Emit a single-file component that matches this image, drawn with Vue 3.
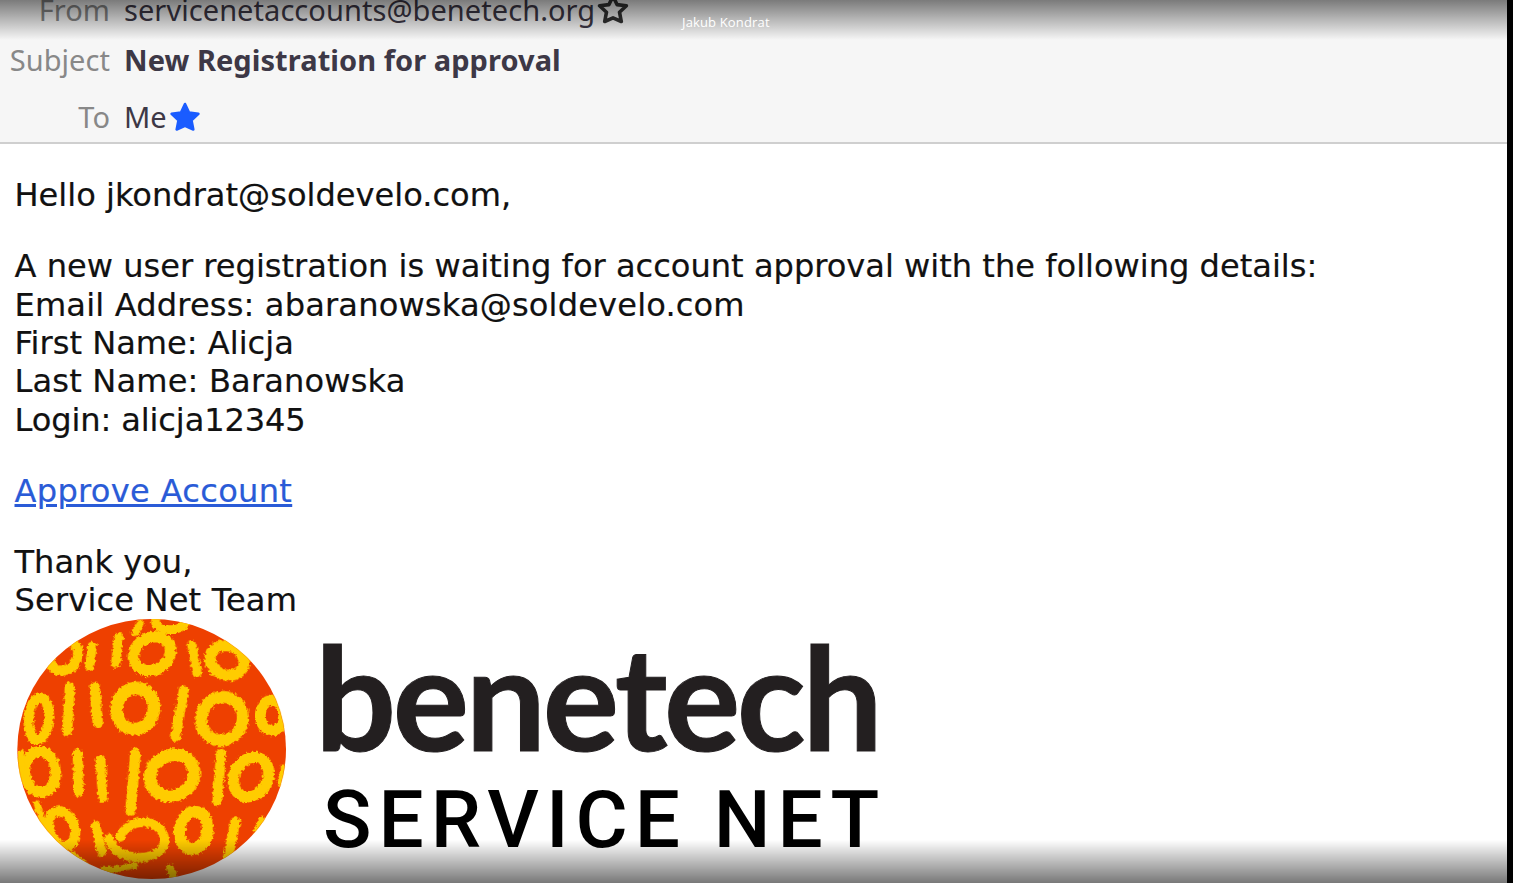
<template>
	<div class="screen">
		<div class="page">
			<header class="mail-head">
				<div class="head-row from">
					<span class="label">From</span>
					<span class="value">servicenetaccounts@benetech.org</span>
					<svg class="star" viewBox="0 0 32 32">
						<path :d="starPath" fill="none" stroke="#333" stroke-width="3.6" stroke-linejoin="round" />
					</svg>
				</div>
				<div class="head-row subject">
					<span class="label">Subject</span>
					<span class="value strong">New Registration for approval</span>
				</div>
				<div class="head-row to">
					<span class="label">To</span>
					<span class="value">Me</span>
					<svg class="star" viewBox="0 0 32 32">
						<path :d="starPath" fill="#1a5cff" stroke="#1a5cff" stroke-width="2.6" stroke-linejoin="round" />
					</svg>
				</div>
			</header>

			<main class="mail-body">
				<p>Hello jkondrat@soldevelo.com,</p>
				<p>
					A new user registration is waiting for account approval with the following details:<br />
					<span class="wide">Email Address: abaranowska@soldevelo.com</span><br />
					First Name: Alicja<br />
					<span class="wide">Last Name: Baranowska</span><br />
					<span class="tight">Login: alicja12345</span>
				</p>
				<p><a href="#" class="approve">Approve Account</a></p>
				<p class="last">Thank you,<br /><span class="wide">Service Net Team</span></p>

				<div class="logo">
					<svg class="globe" viewBox="50 26 810 786">
						<defs>
							<clipPath id="globe-clip">
								<ellipse cx="454" cy="416" rx="403" ry="390" />
							</clipPath>
							<filter id="rough" x="-5%" y="-5%" width="110%" height="110%">
								<feTurbulence type="fractalNoise" baseFrequency="0.11" numOctaves="2" seed="4" />
								<feDisplacementMap in="SourceGraphic" scale="16" xChannelSelector="R" yChannelSelector="G" />
							</filter>
						</defs>
						<g clip-path="url(#globe-clip)">
							<rect x="40" y="20" width="830" height="800" fill="#ee4000" />
							<g filter="url(#rough)" fill="none" stroke="#ffcc00" stroke-linecap="round">
								<ellipse
									v-for="(o, i) in zeros"
									:key="'o' + i"
									:cx="o[0]"
									:cy="o[1]"
									:rx="o[2]"
									:ry="o[3]"
									:stroke-width="o[5]"
									:transform="`rotate(${o[4]} ${o[0]} ${o[1]})`"
								/>
								<line
									v-for="(l, i) in ones"
									:key="'l' + i"
									:x1="l[0]"
									:y1="l[1]"
									:x2="l[2]"
									:y2="l[3]"
									:stroke-width="l[4]"
								/>
								<path d="M325 685C345 745 430 755 475 725C510 695 490 640 430 635C395 635 365 660 360 680" stroke-width="28" />
								<path d="M215 735C240 755 265 775 285 800" stroke-width="26" />
								<path d="M310 775C340 785 370 770 405 765" stroke-width="18" />
							</g>
						</g>
					</svg>
					<div class="wordmark">
						<div class="brand">benetech</div>
						<div class="sub">SERVICE NET</div>
					</div>
				</div>
			</main>
		</div>
		<div class="side-bar"></div>

		<div class="shade top"></div>
		<div class="shade bottom"></div>
		<div class="window-title">Jakub Kondrat</div>
	</div>
</template>

<script setup>
const starPath = 'M16 3l4 8.6 9.4 1.2-6.9 6.4 1.8 9.3L16 24.900l-8.300 3.600 1.800-9.300-6.900-6.400 9.400-1.200z';

// cx, cy, rx, ry, rotation, stroke
const zeros = [
	[510, 32, 45, 26, 0, 26],
	[190, 135, 42, 48, 30, 30],
	[455, 130, 58, 48, -30, 34],
	[680, 150, 52, 44, 20, 34],
	[115, 325, 30, 64, 5, 30],
	[405, 295, 56, 62, 15, 38],
	[665, 325, 62, 66, 30, 36],
	[815, 315, 35, 46, 0, 32],
	[120, 485, 46, 62, -5, 32],
	[515, 495, 68, 60, -30, 38],
	[752, 500, 50, 62, 30, 34],
	[185, 655, 38, 54, -20, 30],
	[580, 660, 42, 56, 10, 36]
];

// x1, y1, x2, y2, stroke
const ones = [
	[420, 40, 405, 65, 24],
	[275, 108, 268, 168, 28],
	[355, 82, 346, 158, 28],
	[575, 105, 590, 188, 28],
	[208, 230, 201, 362, 30],
	[283, 232, 292, 336, 32],
	[550, 240, 526, 380, 30],
	[60, 430, 62, 500, 22],
	[232, 430, 235, 545, 30],
	[300, 450, 308, 560, 30],
	[405, 430, 391, 600, 32],
	[662, 430, 651, 572, 30],
	[285, 645, 305, 725, 28],
	[705, 635, 682, 745, 30],
	[110, 580, 128, 640, 20],
	[510, 775, 520, 805, 26],
	[785, 630, 770, 665, 22],
	[850, 470, 838, 520, 16]
];
</script>

<style>
html,
body {
	margin: 0;
	background: #fff;
}
</style>

<style scoped>
.screen {
	position: relative;
	display: flex;
	width: 1513px;
	height: 883px;
	overflow: hidden;
	background: #fff;
}

.page {
	width: 1507px;
}

.side-bar {
	width: 6px;
	background: #000;
}

.mail-head {
	box-sizing: border-box;
	height: 153px;
	background: #f6f6f6;
	border-bottom: 2px solid #cfcfcf;
	font-family: "Noto Sans", sans-serif;
	font-size: 29px;
	color: #3d3846;
}

.head-row {
	display: flex;
	align-items: center;
	gap: 14px;
	height: 56px;
}

.head-row.from {
	height: 36px;
	margin-top: -9px;
	letter-spacing: 0.06px;
}

.head-row.subject {
	height: 57.5px;
	margin-top: 4px;
	letter-spacing: 0.06px;
}

.label {
	width: 110px;
	text-align: right;
	color: #888;
	flex: none;
}

.value.strong {
	font-weight: 700;
}

.star {
	flex: none;
	width: 32px;
	height: 32px;
	margin-left: -12px;
}

.mail-body {
	padding: 32px 0 0 14.5px;
	font-family: "DejaVu Sans", sans-serif;
	font-size: 32.1px;
	line-height: 38.4px;
	color: #111;
	-webkit-text-stroke: 0.2px #111;
}

.mail-body p {
	margin: 0 0 32.7px;
}

.mail-body p.last {
	margin-bottom: 0;
}

.wide {
	letter-spacing: 0.16px;
}

.tight {
	letter-spacing: -0.12px;
}

.approve {
	letter-spacing: 0.3px;
	color: #2a5bd7;
	-webkit-text-stroke: 0.2px #2a5bd7;
}

.logo {
	display: flex;
	gap: 28px;
	margin: -1px 0 0 2.500px;
}

.globe {
	flex: none;
	width: 270px;
	height: 262px;
}

.wordmark {
	padding-top: 2px;
	font-family: Lato, sans-serif;
}

.brand {
	font-size: 143px;
	font-weight: 700;
	line-height: 150px;
	letter-spacing: -3.5px;
	color: #231f20;
	-webkit-text-stroke: 1px #231f20;
}

.sub {
	margin: 9px 0 0 8px;
	font-family: Roboto, sans-serif;
	font-size: 80px;
	font-weight: 500;
	line-height: 80px;
	letter-spacing: 7px;
	white-space: nowrap;
	color: #000;
	-webkit-text-stroke: 0;
}

.shade {
	position: absolute;
	left: 0;
	right: 0;
	pointer-events: none;
}

.shade.top {
	top: 0;
	height: 40px;
	background: linear-gradient(rgba(0, 0, 0, 0.5), rgba(0, 0, 0, 0));
}

.shade.bottom {
	bottom: 0;
	height: 43px;
	background: linear-gradient(rgba(0, 0, 0, 0), rgba(0, 0, 0, 0.53));
}

.window-title {
	position: absolute;
	top: 13px;
	left: 682px;
	font-family: "Open Sans", sans-serif;
	font-size: 13px;
	letter-spacing: 0.15px;
	color: #fff;
}
</style>
